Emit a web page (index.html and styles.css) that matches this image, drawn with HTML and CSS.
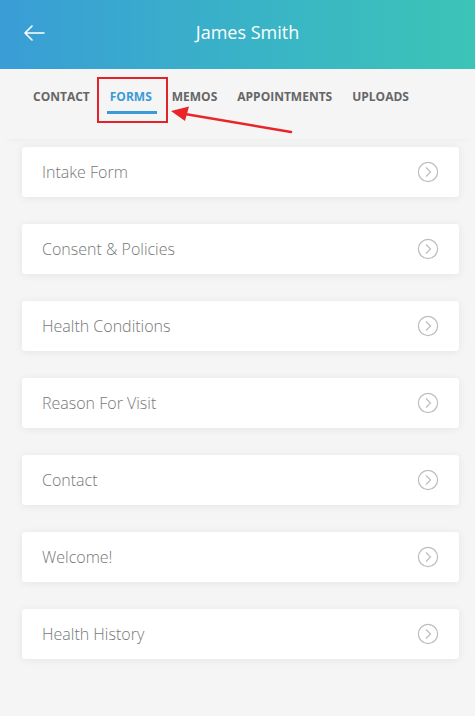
FILE: index.html
```html
<!DOCTYPE html>
<html>
<head>
<meta charset="utf-8">
<link rel="stylesheet" href="styles.css">
</head>
<body>
<div class="app">
  <header class="topbar">
    <svg class="back" width="22" height="16" viewBox="0 0 22 16"><path d="M21 8H2M9 1L2 8l7 7" fill="none" stroke="#fff" stroke-width="1.6" stroke-linecap="round" stroke-linejoin="round"/></svg>
    <h1 class="title">James Smith</h1>
  </header>
  <nav class="tabs">
    <span class="tab">CONTACT</span>
    <span class="tab active">FORMS</span>
    <span class="tab">MEMOS</span>
    <span class="tab">APPOINTMENTS</span>
    <span class="tab">UPLOADS</span>
  </nav>
  <div class="highlight"></div>
  <svg class="pointer" width="130" height="30" viewBox="0 0 130 30"><path d="M124 27L18 9" stroke="#e8262a" stroke-width="2.5" fill="none" stroke-linecap="round"/><path d="M4 6L22 1.5L18 16Z" fill="#e8262a"/></svg>
  <main class="list">
    <div class="card"><span>Intake Form</span><svg class="go" width="22" height="22" viewBox="0 0 22 22"><circle cx="11" cy="11" r="9.6" fill="none" stroke="#bdbdbd" stroke-width="1.2"/><path d="M9 6.5l4.5 4.5L9 15.5" fill="none" stroke="#bdbdbd" stroke-width="1.2"/></svg></div>
    <div class="card"><span>Consent &amp; Policies</span><svg class="go" width="22" height="22" viewBox="0 0 22 22"><circle cx="11" cy="11" r="9.6" fill="none" stroke="#bdbdbd" stroke-width="1.2"/><path d="M9 6.5l4.5 4.5L9 15.5" fill="none" stroke="#bdbdbd" stroke-width="1.2"/></svg></div>
    <div class="card"><span>Health Conditions</span><svg class="go" width="22" height="22" viewBox="0 0 22 22"><circle cx="11" cy="11" r="9.6" fill="none" stroke="#bdbdbd" stroke-width="1.2"/><path d="M9 6.5l4.5 4.5L9 15.5" fill="none" stroke="#bdbdbd" stroke-width="1.2"/></svg></div>
    <div class="card"><span>Reason For Visit</span><svg class="go" width="22" height="22" viewBox="0 0 22 22"><circle cx="11" cy="11" r="9.6" fill="none" stroke="#bdbdbd" stroke-width="1.2"/><path d="M9 6.5l4.5 4.5L9 15.5" fill="none" stroke="#bdbdbd" stroke-width="1.2"/></svg></div>
    <div class="card"><span>Contact</span><svg class="go" width="22" height="22" viewBox="0 0 22 22"><circle cx="11" cy="11" r="9.6" fill="none" stroke="#bdbdbd" stroke-width="1.2"/><path d="M9 6.5l4.5 4.5L9 15.5" fill="none" stroke="#bdbdbd" stroke-width="1.2"/></svg></div>
    <div class="card"><span>Welcome!</span><svg class="go" width="22" height="22" viewBox="0 0 22 22"><circle cx="11" cy="11" r="9.6" fill="none" stroke="#bdbdbd" stroke-width="1.2"/><path d="M9 6.5l4.5 4.5L9 15.5" fill="none" stroke="#bdbdbd" stroke-width="1.2"/></svg></div>
    <div class="card"><span>Health History</span><svg class="go" width="22" height="22" viewBox="0 0 22 22"><circle cx="11" cy="11" r="9.6" fill="none" stroke="#bdbdbd" stroke-width="1.2"/><path d="M9 6.5l4.5 4.5L9 15.5" fill="none" stroke="#bdbdbd" stroke-width="1.2"/></svg></div>
  </main>
</div>
</body>
</html>
```
FILE: styles.css
```css
* { box-sizing: border-box; }
html, body { margin: 0; padding: 0; }
body {
  background: #f5f5f5;
  font-family: "Open Sans", "Liberation Sans", sans-serif;
  width: 475px;
  height: 716px;
  overflow: hidden;
}
.app { position: relative; height: 716px; }
.topbar {
  height: 69px;
  background: linear-gradient(90deg, #3a9dd6 0%, #39b4c6 55%, #3cc4b7 100%);
  display: flex;
  align-items: center;
  justify-content: center;
  position: relative;
  padding-bottom: 6px;
}
.back { position: absolute; left: 23px; top: 25px; }
.title {
  margin: 0;
  color: #fff;
  font-size: 18px;
  font-weight: 500;
  line-height: 24px;
  transform: translateX(10px);
}
.tabs {
  display: flex;
  padding: 20px 0 0 23px;
  height: 70px;
  align-items: flex-start;
  box-shadow: 0 8px 8px -8px rgba(0,0,0,0.05);
}
.tab {
  font-size: 12px;
  font-weight: 700;
  color: #666;
  padding: 0 10px;
  height: 25px;
  line-height: 16px;
  position: relative;
}
.tab.active { color: #3b9bd6; }
.tab.active::after {
  content: "";
  position: absolute;
  left: 7px; right: 5px;
  bottom: 0;
  height: 3px;
  background: #3b9bd6;
}
.highlight {
  position: absolute;
  left: 97px; top: 77px;
  width: 71px; height: 46px;
  border: 2px solid #e3232a;
}
.pointer { position: absolute; left: 167px; top: 105px; }
.list {
  display: flex;
  flex-direction: column;
  gap: 27px;
  padding: 8px 16px 0 22px;
}
.card {
  height: 50px;
  background: #fff;
  border-radius: 3px;
  box-shadow: 0 1px 8px rgba(0,0,0,0.07);
  display: flex;
  align-items: center;
  justify-content: space-between;
  padding: 0 20px 0 20px;
  font-size: 16px;
  font-weight: 300;
  color: #777;
}
.go { flex: none; }
```
